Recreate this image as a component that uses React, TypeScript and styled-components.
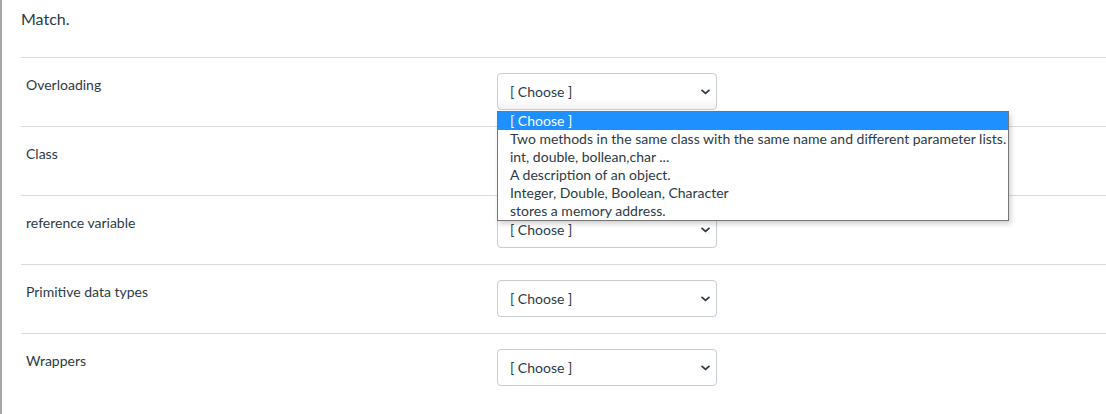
import React from "react";
import styled, { createGlobalStyle } from "styled-components";

const GlobalStyle = createGlobalStyle`
  html, body {
    margin: 0;
    padding: 0;
    background: #ffffff;
  }
  body {
    font-family: Lato, "Open Sans", "Liberation Sans", sans-serif;
    color: #2d3b45;
  }
`;

const answers = [
  "[ Choose ]",
  "Two methods in the same class with the same name and different parameter lists.",
  "int, double, bollean,char ...",
  "A description of an object.",
  "Integer, Double, Boolean, Character",
  "stores a memory address.",
];

const terms = [
  "Overloading",
  "Class",
  "reference variable",
  "Primitive data types",
  "Wrappers",
];

export default function App() {
  return (
    <>
      <GlobalStyle />
      <Page>
        <Question>
          <Prompt>Match.</Prompt>
          {terms.map((term, i) => (
            <Row key={term}>
              <Term>{term}</Term>
              <SelectWrap>
                <SelectBox $focused={i === 0}>
                  <SelectText>[ Choose ]</SelectText>
                  <Chevron viewBox="0 0 10 6" aria-hidden>
                    <path
                      d="M1.2 1.2 L5 4.6 L8.8 1.2"
                      fill="none"
                      stroke="#2d3b45"
                      strokeWidth="2"
                      strokeLinecap="round"
                      strokeLinejoin="round"
                    />
                  </Chevron>
                </SelectBox>
                {i === 0 && (
                  <OptionList>
                    {answers.map((a, j) => (
                      <Option key={a} $active={j === 0}>
                        {a}
                      </Option>
                    ))}
                  </OptionList>
                )}
              </SelectWrap>
            </Row>
          ))}
        </Question>
      </Page>
    </>
  );
}

const Page = styled.div`
  min-height: 414px;
  border-left: 2px solid #a5a5a5;
  box-sizing: border-box;
  padding-left: 19px;
`;

const Question = styled.div`
  display: flex;
  flex-direction: column;
`;

const Prompt = styled.div`
  font-size: 16px;
  line-height: 20px;
  padding-top: 9px;
  height: 58px;
  box-sizing: border-box;
  border-bottom: 1px solid #dadada;
`;

const Row = styled.div`
  display: grid;
  grid-template-columns: 476px 1fr;
  height: 69px;
  box-sizing: border-box;
  & + & {
    border-top: 1px solid #dadada;
  }
  &:nth-child(2) {
    height: 68px;
  }
`;

const Term = styled.div`
  font-size: 14px;
  line-height: 20px;
  padding: 17px 0 0 5px;
`;

const SelectWrap = styled.div`
  position: relative;
  align-self: start;
  margin-top: 15px;
  width: 220px;
`;

const SelectBox = styled.div<{ $focused: boolean }>`
  height: 37px;
  box-sizing: border-box;
  border: 1px solid #c7cdd1;
  border-radius: 4px;
  background: ${(p) =>
    p.$focused ? "linear-gradient(#ffffff 70%, #f2f2f2)" : "#ffffff"};
  display: flex;
  align-items: center;
  justify-content: space-between;
  padding: 0 6px 0 12px;
`;

const SelectText = styled.span`
  font-size: 14px;
  color: #2d3b45;
`;

const Chevron = styled.svg`
  width: 9px;
  height: 6px;
`;

const OptionList = styled.div`
  position: absolute;
  z-index: 5;
  top: 38px;
  left: 0;
  width: 512px;
  box-sizing: border-box;
  border: 1px solid #767676;
  background: #ffffff;
  box-shadow: 2px 3px 5px rgba(0, 0, 0, 0.18);
`;

const Option = styled.div<{ $active: boolean }>`
  height: 18px;
  line-height: 18px;
  font-size: 14px;
  padding-left: 12px;
  white-space: nowrap;
  color: ${(p) => (p.$active ? "#ffffff" : "#2d3b45")};
  background: ${(p) => (p.$active ? "#1e90ff" : "transparent")};
`;
